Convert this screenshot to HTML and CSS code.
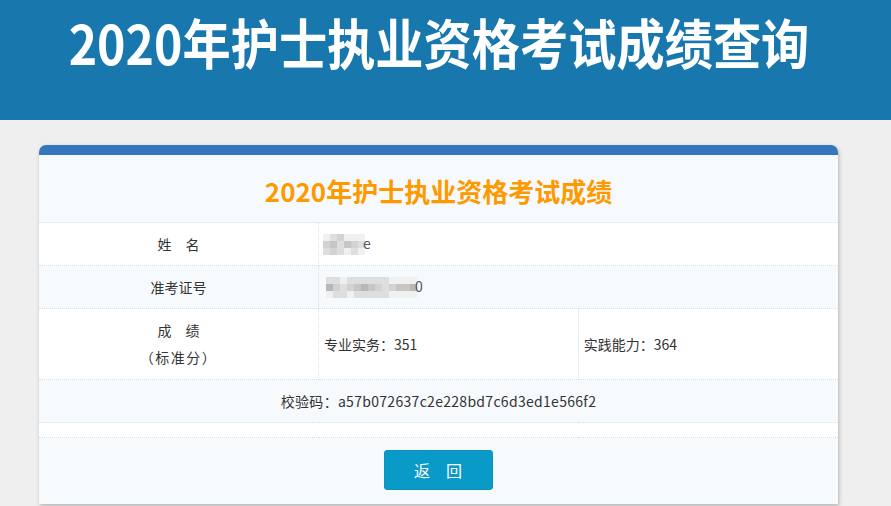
FILE: index.html
```
<!DOCTYPE html>
<html lang="zh-CN">
<head>
<meta charset="utf-8">
<title>2020年护士执业资格考试成绩查询</title>
<link rel="stylesheet" href="styles.css">
</head>
<body>
<header class="top">
  <h1 class="top-title">2020年护士执业资格考试成绩查询</h1>
</header>
<main class="card">
  <div class="card-bar"></div>
  <h2 class="card-title">2020年护士执业资格考试成绩</h2>
  <table class="result">
    <tr class="row-white">
      <td class="label">姓　名</td>
      <td class="value" colspan="2">
        <span class="mosaic m-name"><i class="w"></i><i class="b"></i><i class="a"></i><i class="w"></i><i class="w"></i><i class="w"></i><i class="a"></i><i class="c"></i><i class="b"></i><i class="c"></i><i class="a"></i><i class="b"></i><i class="b"></i><i class="a"></i><i class="b"></i><i class="w"></i><i class="b"></i><i class="w"></i></span><span class="tail">e</span>
      </td>
    </tr>
    <tr class="row-light">
      <td class="label">准考证号</td>
      <td class="value" colspan="2">
        <span class="mosaic m-id"><i class="b"></i><i class="b"></i><i class="w"></i><i class="b"></i><i class="b"></i><i class="b"></i><i class="b"></i><i class="b"></i><i class="b"></i><i class="w"></i><i class="w"></i><i class="w"></i><i class="w"></i><i class="d"></i><i class="a"></i><i class="b"></i><i class="a"></i><i class="c"></i><i class="d"></i><i class="c"></i><i class="a"></i><i class="b"></i><i class="a"></i><i class="c"></i><i class="c"></i><i class="d"></i><i class="w"></i><i class="b"></i><i class="b"></i><i class="w"></i><i class="b"></i><i class="b"></i><i class="b"></i><i class="b"></i><i class="b"></i><i class="w"></i><i class="w"></i><i class="w"></i><i class="w"></i></span><span class="tail">0</span>
      </td>
    </tr>
    <tr class="row-white row-score">
      <td class="label">成　绩<br><span class="sub">（标准分）</span></td>
      <td class="value half">专业实务：351</td>
      <td class="value">实践能力：364</td>
    </tr>
    <tr class="row-light">
      <td class="center code" colspan="3">校验码：a57b072637c2e228bd7c6d3ed1e566f2</td>
    </tr>
    <tr class="row-white row-gap">
      <td colspan="3"></td>
    </tr>
  </table>
  <div class="actions">
    <button class="btn" type="button">返　回</button>
  </div>
</main>
</body>
</html>
```
FILE: styles.css
```
html, body {
  margin: 0;
  padding: 0;
}
body {
  background: #efefef;
  font-family: "Noto Sans CJK SC", "Microsoft YaHei", sans-serif;
  color: #333;
  font-size: 14px;
  height: 506px;
  overflow: hidden;
}
.top {
  background: #1878ae;
  height: 120px;
}
.top-title {
  margin: 0;
  text-align: center;
  width: 878px;
  color: #fff;
  font-size: 54px;
  font-weight: 700;
  line-height: 84px;
  letter-spacing: 0;
  transform: scaleX(0.893);
  white-space: nowrap;
}
.card {
  display: block;
  width: 799px;
  margin: 25px 0 0 39px;
  background: #f6fafd;
  border-radius: 7px 7px 0 0;
  box-shadow: 1px 2px 4px rgba(0, 0, 0, 0.25);
  overflow: hidden;
}
.card-bar {
  height: 10px;
  background: #3577bc;
}
.card-title {
  margin: 0;
  height: 67px;
  line-height: 71px;
  text-align: center;
  color: #ff9900;
  font-size: 26px;
  font-weight: 700;
  border-bottom: 1px dotted #cfe2f4;
}
.result {
  width: 100%;
  border-collapse: collapse;
  table-layout: fixed;
}
.result td {
  border-bottom: 1px dotted #cfe2f4;
  padding: 0 5px;
  height: 42px;
  line-height: 20px;
}
.row-white {
  background: #fff;
}
.row-light {
  background: #f6fafd;
}
.label {
  width: 269px;
  text-align: center;
  border-right: 1px dotted #cfe2f4;
}
.value.half {
  width: 249px;
  border-right: 1px dotted #cfe2f4;
}
.result .row-score td {
  height: 70px;
}
.result .row-score .label {
  line-height: 27px;
}
.sub {
  letter-spacing: 1.5px;
}
.center {
  text-align: center;
}
.code {
  letter-spacing: 0.3px;
}
.result .row-gap td {
  height: 14px;
}
.mosaic {
  display: inline-grid;
  grid-auto-rows: 7px;
  vertical-align: middle;
  margin-top: -2px;
}
.mosaic i {
  display: block;
}
.mosaic .w { background: #f0f0f0; }
.mosaic .a { background: #d2d2d2; }
.mosaic .b { background: #dedede; }
.mosaic .c { background: #c6c6c6; }
.mosaic .d { background: #b8b8b8; }
.m-name {
  grid-template-columns: repeat(6, 7px);
  margin-left: -1px;
}
.m-id {
  grid-template-columns: repeat(13, 7px);
  margin-left: 2px;
}
.tail {
  color: #555;
  margin-left: -2px;
}
.actions {
  height: 66px;
  display: flex;
  justify-content: center;
  padding-top: 12px;
  box-sizing: border-box;
}
.btn {
  width: 109px;
  height: 40px;
  background: #0a9ac8;
  border: 1px solid #0b92bd;
  border-radius: 3px;
  color: #fff;
  font-family: "Noto Sans CJK SC", sans-serif;
  font-size: 16px;
  margin-left: -1px;
}
```
